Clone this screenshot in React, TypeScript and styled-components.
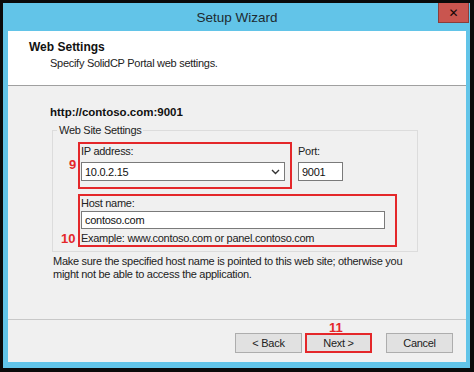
import React from "react";
import styled, { createGlobalStyle } from "styled-components";

const GlobalStyle = createGlobalStyle`
  html, body {
    margin: 0;
    padding: 0;
    background: #000;
  }
  body {
    font-family: "Liberation Sans", Arial, sans-serif;
    font-size: 11px;
    letter-spacing: -0.28px;
    color: #1a1a1a;
  }
`;

const Frame = styled.div`
  width: 474px;
  height: 372px;
  box-sizing: border-box;
  padding: 3px 4px 4px 3px;
  background: #0a0a0a;
`;

const Window = styled.div`
  height: 100%;
  display: flex;
  flex-direction: column;
  background: #62c4e8;
  padding: 0 4px 6px 5px;
  box-sizing: border-box;
`;

const TitleBar = styled.div`
  height: 28px;
  display: flex;
  align-items: flex-start;
  margin-right: -3px;
`;

const Title = styled.div`
  flex: 1;
  margin-left: 28px;
  text-align: center;
  font-size: 13.5px;
  line-height: 16px;
  letter-spacing: 0;
  color: #1e2a30;
  padding-top: 7px;
`;

const CloseButton = styled.div`
  flex: none;
  width: 31px;
  height: 20px;
  background: #c9554f;
  border: 1px solid #8a3d3a;
  border-top: none;
  box-sizing: border-box;
  display: flex;
  align-items: center;
  justify-content: center;
  font-family: "DejaVu Sans", sans-serif;
  font-weight: bold;
  font-size: 12px;
  line-height: 12px;
  color: #140606;
`;

const Content = styled.div`
  flex: 1;
  display: flex;
  flex-direction: column;
  background: #f0f0f0;
`;

const Header = styled.div`
  height: 55px;
  box-sizing: border-box;
  background: #fff;
  border-bottom: 1px solid #a0a0a0;
  padding: 9px 0 0 21px;
`;

const HeaderTitle = styled.div`
  font-weight: bold;
  font-size: 12px;
  letter-spacing: 0;
  line-height: 14px;
  color: #111;
`;

const HeaderSub = styled.div`
  margin: 3px 0 0 21px;
  line-height: 13px;
  color: #222;
`;

const Body = styled.div`
  flex: 1;
  padding: 19px 0 0 42px;
  display: flex;
  flex-direction: column;
`;

const Url = styled.div`
  font-weight: bold;
  font-size: 11.5px;
  letter-spacing: 0;
  line-height: 14px;
  color: #111;
`;

const GroupBox = styled.fieldset`
  width: 366px;
  height: 128px;
  box-sizing: border-box;
  margin: 5px 0 0 2px;
  padding: 0;
  border: 1px solid #dcdcdc;
`;

const Legend = styled.legend`
  margin-left: 4px;
  padding: 0 2px;
  line-height: 13px;
  color: #222;
`;

const Row = styled.div<{ $top: number }>`
  display: flex;
  align-items: flex-start;
  margin: ${(p) => p.$top}px 0 0 25px;
  gap: 6px;
`;

const Marked = styled.div<{ $w: number; $h: number }>`
  position: relative;
  width: ${(p) => p.$w}px;
  height: ${(p) => p.$h}px;
  box-sizing: border-box;
  border: 2px solid #e4272a;
  padding: 1px 0 0 1px;
`;

const Mark = styled.span<{ $left: number; $top: number }>`
  position: absolute;
  left: ${(p) => p.$left}px;
  top: ${(p) => p.$top}px;
  color: #e4272a;
  font-weight: bold;
  font-size: 13px;
  letter-spacing: 0;
  line-height: 13px;
`;

const FieldLabel = styled.div`
  line-height: 13px;
  color: #222;
`;

const Field = styled.div<{ $w: number; $h?: number; $gap?: number }>`
  width: ${(p) => p.$w}px;
  height: ${(p) => p.$h ?? 19}px;
  box-sizing: border-box;
  margin-top: ${(p) => p.$gap ?? 4}px;
  background: #fff;
  border: 1px solid #7a7a7a;
  display: flex;
  align-items: center;
  justify-content: space-between;
  padding: 0 4px 0 3px;
  color: #111;
`;

const PortCol = styled.div`
  padding-top: 3px;
`;

const Example = styled.div`
  margin-top: 3px;
  line-height: 13px;
  color: #222;
`;

const Note = styled.div`
  margin: 3px 0 0 3px;
  line-height: 13px;
  color: #222;
`;

const Footer = styled.div`
  height: 43px;
  box-sizing: border-box;
  border-top: 1px solid #c8c8c8;
  display: flex;
  justify-content: flex-end;
  align-items: flex-start;
  padding: 13px 13px 0 0;
`;

const Button = styled.div<{ $marked?: boolean; $gap?: number }>`
  position: relative;
  width: 67px;
  height: 20px;
  box-sizing: border-box;
  margin-left: ${(p) => p.$gap ?? 0}px;
  background: #e1e1e1;
  border: ${(p) => (p.$marked ? "2px solid #e4272a" : "1px solid #adadad")};
  display: flex;
  align-items: center;
  justify-content: center;
  color: #222;
`;

const Chevron = () => (
  <svg width="9" height="6" viewBox="0 0 9 6">
    <path d="M1 1l3.5 3.5L8 1" fill="none" stroke="#333" strokeWidth="1.4" />
  </svg>
);

export default function App() {
  return (
    <>
      <GlobalStyle />
      <Frame>
        <Window>
          <TitleBar>
            <Title>Setup Wizard</Title>
            <CloseButton>✕</CloseButton>
          </TitleBar>
          <Content>
            <Header>
              <HeaderTitle>Web Settings</HeaderTitle>
              <HeaderSub>Specify SolidCP Portal web settings.</HeaderSub>
            </Header>
            <Body>
              <Url>http://contoso.com:9001</Url>
              <GroupBox>
                <Legend>Web Site Settings</Legend>
                <Row $top={5}>
                  <Marked $w={214} $h={47}>
                    <Mark $left={-11} $top={14}>9</Mark>
                    <FieldLabel>IP address:</FieldLabel>
                    <Field $w={204}>
                      10.0.2.15
                      <Chevron />
                    </Field>
                  </Marked>
                  <PortCol>
                    <FieldLabel>Port:</FieldLabel>
                    <Field $w={45}>9001</Field>
                  </PortCol>
                </Row>
                <Row $top={5}>
                  <Marked $w={319} $h={53}>
                    <Mark $left={-19} $top={36}>10</Mark>
                    <FieldLabel>Host name:</FieldLabel>
                    <Field $w={304} $h={18} $gap={1}>
                      contoso.com
                    </Field>
                    <Example>Example: www.contoso.com or panel.contoso.com</Example>
                  </Marked>
                </Row>
              </GroupBox>
              <Note>
                Make sure the specified host name is pointed to this web site; otherwise you
                <br />
                might not be able to access the application.
              </Note>
            </Body>
            <Footer>
              <Button>&lt; Back</Button>
              <Button $marked $gap={3}>
                <Mark $left={22} $top={-14}>11</Mark>
                Next &gt;
              </Button>
              <Button $gap={14}>Cancel</Button>
            </Footer>
          </Content>
        </Window>
      </Frame>
    </>
  );
}
